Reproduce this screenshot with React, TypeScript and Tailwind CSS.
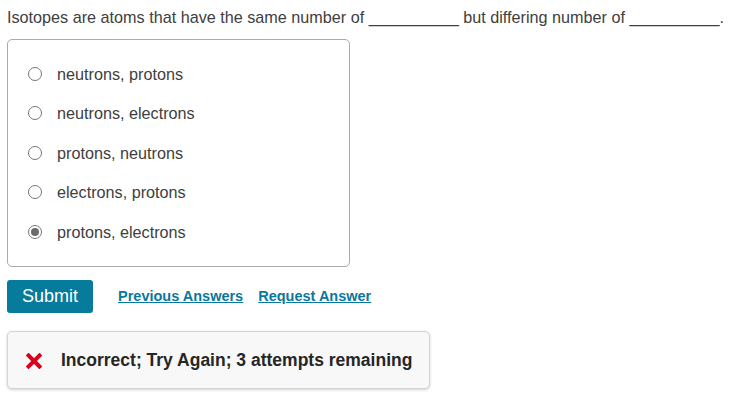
const options = [
  { label: 'neutrons, protons', checked: false },
  { label: 'neutrons, electrons', checked: false },
  { label: 'protons, neutrons', checked: false },
  { label: 'electrons, protons', checked: false },
  { label: 'protons, electrons', checked: true },
]

function Radio({ checked }: { checked: boolean }) {
  return (
    <span className="relative flex h-[14px] w-[14px] shrink-0 items-center justify-center rounded-full border border-[#767676] bg-white">
      {checked && <span className="h-[8px] w-[8px] rounded-full bg-[#6b6b6b]" />}
    </span>
  )
}

function RedX() {
  return (
    <svg width="16" height="16" viewBox="0 0 16 16" className="shrink-0">
      <path d="M2.5 2.5 L13.5 13.5 M13.5 2.5 L2.5 13.5" stroke="#d8001c" strokeWidth="4" strokeLinecap="square" />
    </svg>
  )
}

export default function App() {
  return (
    <div className="min-h-[413px] w-[756px] bg-white px-[7px] pt-[7px] font-['Liberation_Sans',Arial,sans-serif] text-[#404040]">
      <p className="whitespace-nowrap text-[16.2px] leading-[20px]">
        Isotopes are atoms that have the same number of __________ but differing number of __________.
      </p>

      <div className="mt-[12px] w-[343px] rounded-[5px] border border-[#ababab] pl-[20px] pr-[21px] py-[14px]">
        {options.map((o) => (
          <label key={o.label} className="flex h-[39.5px] items-center gap-[15px]">
            <Radio checked={o.checked} />
            <span className="text-[16.2px] leading-none">{o.label}</span>
          </label>
        ))}
      </div>

      <div className="mt-[13px] flex items-center">
        <button className="flex h-[33px] w-[86px] items-center justify-center rounded-[3px] bg-[#077b9b] text-[18px] text-white">
          Submit
        </button>
        <a className="ml-[25px] mt-[1px] text-[14.5px] font-bold text-[#0a789c] underline">Previous Answers</a>
        <a className="ml-[15px] mt-[1px] text-[14.5px] font-bold text-[#0a789c] underline">Request Answer</a>
      </div>

      <div className="mt-[18px] flex h-[58px] w-[423px] items-center rounded-[5px] border border-[#d3d3d3] bg-[#f8f8f8] pl-[18px] pt-[2px] shadow-[0_1px_3px_rgba(0,0,0,0.18)]">
        <RedX />
        <span className="ml-[19px] text-[17.5px] font-bold text-[#262626]">Incorrect; Try Again; 3 attempts remaining</span>
      </div>
    </div>
  )
}
